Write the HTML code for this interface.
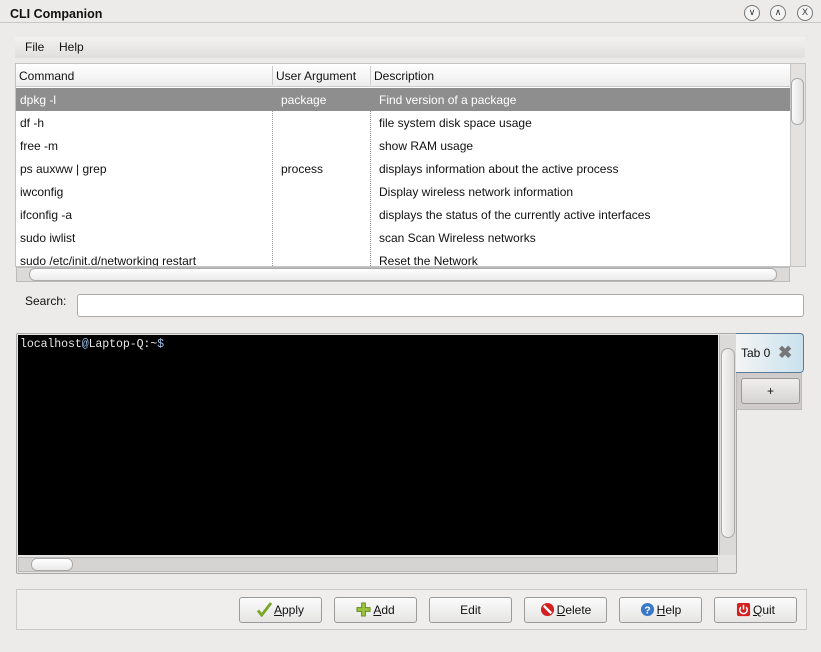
<!DOCTYPE html>
<html><head><style>
*{box-sizing:border-box;margin:0;padding:0}
body{width:821px;height:652px;background:#ecebea;font-family:"Liberation Sans",sans-serif;font-size:12px;color:#111;position:relative;overflow:hidden}
.a{position:absolute}
.title{left:10px;top:7px;font-weight:bold;font-size:12.5px}
.wb{width:16px;height:16px;border:1px solid #777;border-radius:50%;font-size:9px;text-align:center;line-height:13px;color:#333;background:#f4f4f4}
.row{position:absolute;left:16px;width:774px;height:23px;line-height:24px}
.row span{position:absolute}
.c1{left:4px}.c2{left:265px}.c3{left:363px}
.btn{position:absolute;top:597px;width:83px;height:26px;border:1px solid #9a9a9a;border-radius:3px;background:linear-gradient(#fbfbfb,#e6e5e4);text-align:center;line-height:24px;font-size:12px}
.btn u{text-decoration:underline}
.ic{display:inline-block;width:15px;height:15px;vertical-align:-3px;margin-right:2px}
</style></head><body>
<div class="a title">CLI Companion</div>
<div class="a" style="left:0;top:22px;width:821px;height:1px;background:#c8c8c8"></div>
<div class="a wb" style="left:744px;top:5px">&#8744;</div>
<div class="a wb" style="left:770px;top:5px">&#8743;</div>
<div class="a wb" style="left:797px;top:5px">X</div>
<div class="a" style="left:15px;top:37px;width:790px;height:21px;background:linear-gradient(#f2f1f0,#e0dfde)"></div>
<div class="a" style="left:25px;top:40px">File</div>
<div class="a" style="left:59px;top:40px">Help</div>
<!-- table -->
<div class="a" style="left:15px;top:63px;width:791px;height:204px;background:#fff;border:1px solid #c4c4c4"></div>
<div class="a" style="left:16px;top:64px;width:774px;height:23px;background:linear-gradient(#fff,#eeeded);border-bottom:1px solid #ccc"></div>
<div class="a" style="left:19px;top:69px">Command</div>
<div class="a" style="left:272px;top:66px;width:1px;height:19px;background:#ccc"></div>
<div class="a" style="left:276px;top:69px">User Argument</div>
<div class="a" style="left:370px;top:66px;width:1px;height:19px;background:#ccc"></div>
<div class="a" style="left:374px;top:69px">Description</div>
<div class="a" style="left:272px;top:88px;height:178px;border-left:1px dotted #999"></div>
<div class="a" style="left:370px;top:88px;height:178px;border-left:1px dotted #999"></div>
<div class="row" style="top:88px;background:#8f8e8e;color:#fff"><span class="c1">dpkg -l</span><span class="c2">package</span><span class="c3">Find version of a package</span></div>
<div class="row" style="top:111px"><span class="c1">df -h</span><span class="c3">file system disk space usage</span></div>
<div class="row" style="top:134px"><span class="c1">free -m</span><span class="c3">show RAM usage</span></div>
<div class="row" style="top:157px"><span class="c1">ps auxww | grep</span><span class="c2">process</span><span class="c3">displays information about the active process</span></div>
<div class="row" style="top:180px"><span class="c1">iwconfig</span><span class="c3">Display wireless network information</span></div>
<div class="row" style="top:203px"><span class="c1">ifconfig -a</span><span class="c3">displays the status of the currently active interfaces</span></div>
<div class="row" style="top:226px"><span class="c1">sudo iwlist</span><span class="c3">scan Scan Wireless networks</span></div>
<div class="row" style="top:249px;height:17px;overflow:hidden"><span class="c1">sudo /etc/init.d/networking restart</span><span class="c3">Reset the Network</span></div>
<div class="a" style="left:790px;top:64px;width:15px;height:202px;background:#e4e2e1;border-left:1px solid #c4c4c4"></div>
<div class="a" style="left:791px;top:78px;width:13px;height:47px;border:1px solid #aaa;border-radius:6px;background:linear-gradient(90deg,#fafafa,#e2e0df)"></div>
<div class="a" style="left:16px;top:267px;width:774px;height:15px;background:#dcdad9;border:1px solid #bbb"></div>
<div class="a" style="left:29px;top:268px;width:748px;height:13px;border:1px solid #aaa;border-radius:6px;background:linear-gradient(#fff,#ebeaea)"></div>
<!-- search -->
<div class="a" style="left:25px;top:294px">Search:</div>
<div class="a" style="left:77px;top:294px;width:727px;height:23px;background:#fff;border:1px solid #aaa;border-radius:3px"></div>
<!-- terminal -->
<div class="a" style="left:16px;top:333px;width:721px;height:241px;border:1px solid #aaa;border-radius:2px;background:#e6e4e3"></div>
<div class="a" style="left:18px;top:335px;width:700px;height:220px;background:#000;color:#e6e6e6;font-family:'Liberation Mono',monospace;font-size:11.6px;padding:3px 2px;letter-spacing:-0.1px">localhost<span style="color:#9cc0e8">@</span>Laptop-Q:~<span style="color:#9cc0e8">$</span></div>
<div class="a" style="left:719px;top:335px;width:17px;height:220px;background:#dcdad9;border-left:1px solid #bbb"></div>
<div class="a" style="left:721px;top:348px;width:14px;height:190px;border:1px solid #aaa;border-radius:7px;background:linear-gradient(90deg,#f6f6f6,#dedcdb)"></div>
<div class="a" style="left:18px;top:557px;width:700px;height:15px;background:#d6d4d3;border:1px solid #bbb"></div>
<div class="a" style="left:31px;top:558px;width:42px;height:13px;border:1px solid #aaa;border-radius:6px;background:linear-gradient(#fff,#ebeaea)"></div>
<div class="a" style="left:736px;top:333px;width:68px;height:40px;border:1px solid #5a7a95;border-left:none;border-radius:0 4px 4px 0;background:linear-gradient(90deg,#f4f4f4,#c9e2ee)"></div>
<div class="a" style="left:741px;top:346px">Tab 0</div>
<div class="a" style="left:778px;top:343px;font-size:17px;color:#777;font-weight:bold">&#10006;</div>
<div class="a" style="left:736px;top:373px;width:66px;height:37px;background:#cfcccb;border:1px solid #bbb;border-top:none"></div>
<div class="a" style="left:741px;top:378px;width:59px;height:26px;border:1px solid #999;border-radius:3px;background:linear-gradient(#f0efee,#d6d4d3);text-align:center;line-height:24px">+</div>
<!-- buttons -->
<div class="a" style="left:16px;top:589px;width:791px;height:41px;border:1px solid #c8c8c8;background:#efeeed"></div>
<div class="btn" style="left:239px"><svg class="ic" viewBox="0 0 16 16"><path d="M1 9l4 5L15 1" stroke="#7aa62a" stroke-width="3" fill="none"/></svg><u>A</u>pply</div>
<div class="btn" style="left:334px"><svg class="ic" viewBox="0 0 16 16"><path d="M6 1h4v5h5v4h-5v5H6v-5H1V6h5z" fill="#9bc43d" stroke="#5f8a1e"/></svg><u>A</u>dd</div>
<div class="btn" style="left:429px">Edit</div>
<div class="btn" style="left:524px"><svg class="ic" viewBox="0 0 16 16"><circle cx="8" cy="8" r="7" fill="#d42020"/><path d="M4 4l8 8" stroke="#fff" stroke-width="2.5"/></svg><u>D</u>elete</div>
<div class="btn" style="left:619px"><svg class="ic" viewBox="0 0 16 16"><circle cx="8" cy="8" r="7" fill="#3a78c8"/><text x="8" y="12.5" font-size="11" fill="#fff" text-anchor="middle" font-family="Liberation Sans" font-weight="bold">?</text></svg><u>H</u>elp</div>
<div class="btn" style="left:714px"><svg class="ic" viewBox="0 0 16 16"><rect x="1" y="1" width="14" height="14" rx="2" fill="#d42020"/><path d="M5.2 5.5a4 4 0 1 0 5.6 0M8 3v5" stroke="#fff" stroke-width="1.6" fill="none"/></svg><u>Q</u>uit</div>
</body></html>
